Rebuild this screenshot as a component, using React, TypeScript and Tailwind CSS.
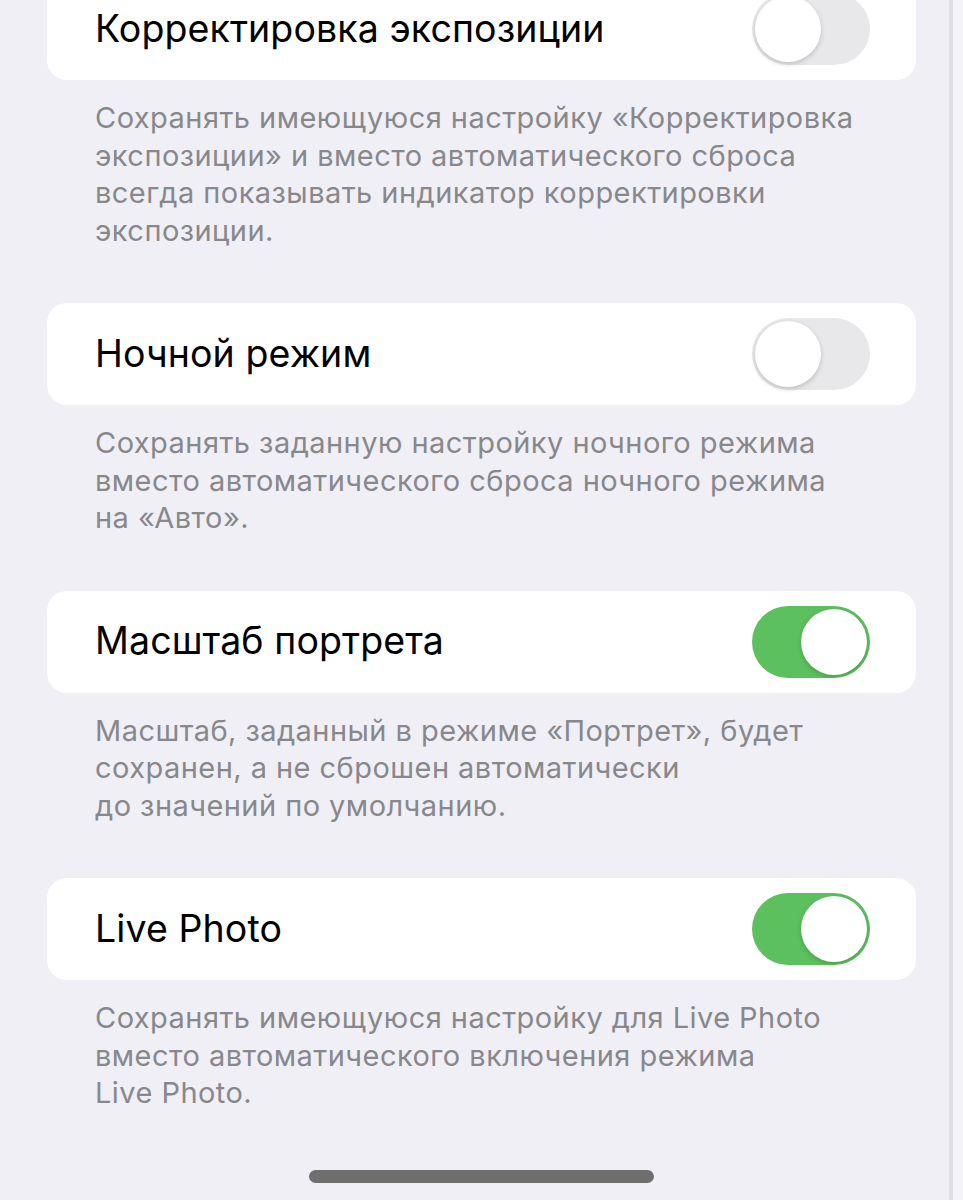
const sections = [
  {
    title: 'Корректировка экспозиции',
    on: false,
    desc: [
      'Сохранять имеющуюся настройку «Корректировка',
      'экспозиции» и вместо автоматического сброса',
      'всегда показывать индикатор корректировки',
      'экспозиции.',
    ],
  },
  {
    title: 'Ночной режим',
    on: false,
    desc: [
      'Сохранять заданную настройку ночного режима',
      'вместо автоматического сброса ночного режима',
      'на «Авто».',
    ],
  },
  {
    title: 'Масштаб портрета',
    on: true,
    desc: [
      'Масштаб, заданный в режиме «Портрет», будет',
      'сохранен, а не сброшен автоматически',
      'до значений по умолчанию.',
    ],
  },
  {
    title: 'Live Photo',
    on: true,
    desc: [
      'Сохранять имеющуюся настройку для Live Photo',
      'вместо автоматического включения режима',
      'Live Photo.',
    ],
  },
];

function Toggle({ on }: { on: boolean }) {
  return (
    <div
      className={`w-[118px] h-[72px] rounded-full p-[3px] flex shrink-0 ${
        on ? 'bg-[#5cc05f] justify-end' : 'bg-[#e8e8ea] justify-start'
      }`}
    >
      <div className="w-[66px] h-[66px] rounded-full bg-white shadow-[0_2px_5px_rgba(0,0,0,0.18)]" />
    </div>
  );
}

export default function App() {
  return (
    <div
      className="h-[1200px] overflow-hidden bg-[#f0eff5] flex"
      style={{ fontFamily: 'Inter, "Noto Sans", sans-serif' }}
    >
      <div className="w-[949px] flex flex-col relative">
        <div className="-mt-[22px] pl-[47px] pr-[33px]">
          {sections.map(s => (
            <div key={s.title}>
              {/* строка с переключателем */}
              <div className="h-[102px] bg-white rounded-[20px] flex items-center justify-between pl-[48px] pr-[46px]">
                <span className="text-[37.5px] text-black tracking-[0.1px]">{s.title}</span>
                <Toggle on={s.on} />
              </div>

              {/* пояснение */}
              <div className="pt-[19px] pb-[54px] pl-[48px] text-[29px] leading-[37.5px] text-[#88888c] tracking-[0.45px]">
                {s.desc.map(line => (
                  <div key={line} className="whitespace-nowrap">{line}</div>
                ))}
              </div>
            </div>
          ))}
        </div>

        {/* индикатор «домой» */}
        <div className="absolute left-[309px] top-[1170px] w-[345px] h-[13px] rounded-full bg-[#6f6f6f]" />
      </div>
      <div className="w-[4px] bg-[#dedee3]" />
      <div className="flex-1 bg-[#f4f3f8]" />
    </div>
  );
}
